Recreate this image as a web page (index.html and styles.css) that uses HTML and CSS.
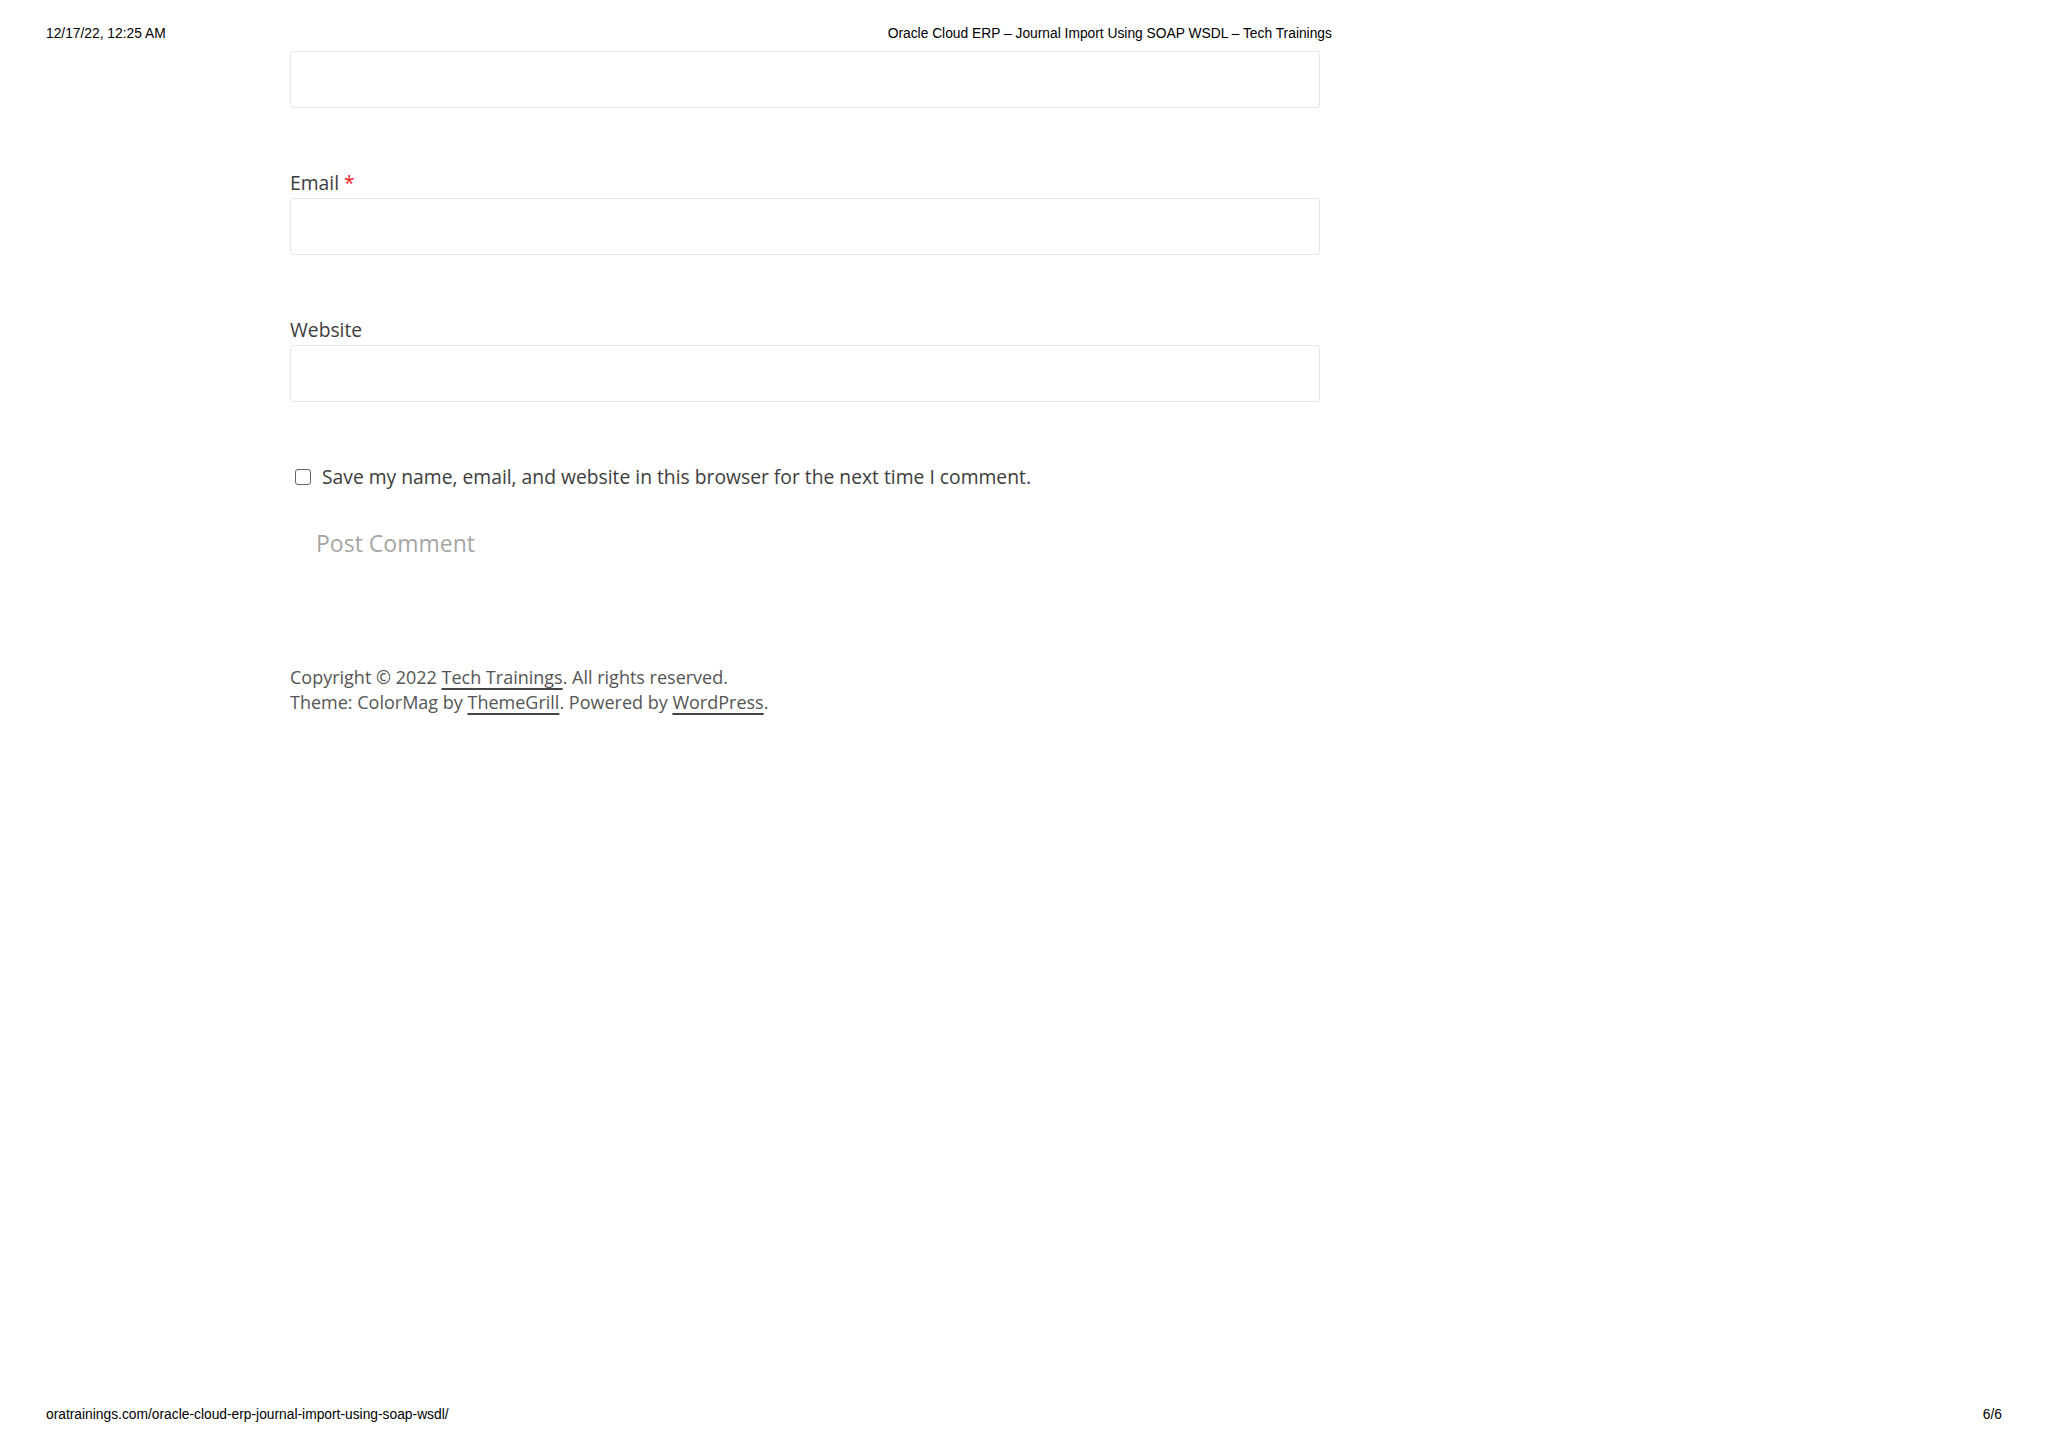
FILE: index.html
```html
<!DOCTYPE html>
<html lang="en">
<head>
<meta charset="utf-8">
<title>Oracle Cloud ERP – Journal Import Using SOAP WSDL – Tech Trainings</title>
<link rel="stylesheet" href="styles.css">
</head>
<body>
<div class="page">
  <header class="print-head">
    <span class="print-date">12/17/22, 12:25 AM</span>
    <span class="print-title">Oracle Cloud ERP – Journal Import Using SOAP WSDL – Tech Trainings</span>
  </header>

  <main class="content">
    <div class="field field-first">
      <input class="text-input" type="text" aria-label="Name">
    </div>
    <div class="field">
      <label class="field-label" for="email">Email <span class="required">*</span></label>
      <input class="text-input" id="email" type="email">
    </div>
    <div class="field">
      <label class="field-label" for="url">Website</label>
      <input class="text-input" id="url" type="url">
    </div>
    <p class="consent">
      <input class="consent-box" id="consent" type="checkbox">
      <label class="consent-label" for="consent">Save my name, email, and website in this browser for the next time I comment.</label>
    </p>
    <p class="form-submit">
      <button class="submit-btn" type="button">Post Comment</button>
    </p>

    <footer class="site-footer">
      <div class="copyright">Copyright © 2022 <a href="#" class="foot-link">Tech Trainings</a>. All rights reserved.</div>
      <div class="credits">Theme: ColorMag by <a href="#" class="foot-link">ThemeGrill</a>. Powered by <a href="#" class="foot-link">WordPress</a>.</div>
    </footer>
  </main>

  <footer class="print-foot">
    <span class="print-url">oratrainings.com/oracle-cloud-erp-journal-import-using-soap-wsdl/</span>
    <span class="print-page">6/6</span>
  </footer>
</div>
</body>
</html>
```

FILE: styles.css
```css
html, body {
  margin: 0;
  padding: 0;
  background: #ffffff;
}

.page {
  width: 2048px;
  height: 1448px;
  display: flex;
  flex-direction: column;
  box-sizing: border-box;
}

/* print header / footer */
.print-head,
.print-foot {
  font-family: "Liberation Sans", Arial, sans-serif;
  font-size: 13.8px;
  line-height: 16px;
  color: #000;
  display: flex;
  padding: 0 46px;
}

.print-head {
  padding-top: 26px;
}

.print-title {
  margin-left: 722px;
}

.print-foot {
  margin-top: auto;
  padding-bottom: 25px;
  justify-content: space-between;
}

/* content column */
.content {
  margin-top: 9px;
  margin-left: 290px;
  width: 1030px;
  font-family: "Open Sans", "Noto Sans", sans-serif;
  color: #3d3d3d;
  font-size: 19.3px;
}

.field-first {
  margin-top: 0;
}

.field-first + .field {
  margin-top: 62px;
}

.field + .field {
  margin-top: 63px;
}

.field-label {
  display: block;
  line-height: 24px;
  margin-bottom: 3px;
}

.required {
  color: #ee1c1c;
}

.text-input {
  display: block;
  width: 100%;
  height: 57px;
  box-sizing: border-box;
  border: 1px solid #e7e7e7;
  border-radius: 3px;
  background: #ffffff;
  margin: 0;
  padding: 0 10px;
  font: inherit;
}

.consent {
  margin: 63px 0 0 0;
  display: flex;
  align-items: center;
  line-height: 24px;
}

.consent-box {
  -webkit-appearance: none;
  appearance: none;
  width: 16px;
  height: 16px;
  flex: none;
  box-sizing: border-box;
  margin: 0 11px 0 5px;
  border: 1.5px solid #666666;
  border-radius: 3px;
  background: #fff;
}

.form-submit {
  margin: 39px 0 0 0;
}

.submit-btn {
  font-family: "Open Sans", "Noto Sans", sans-serif;
  font-size: 23px;
  line-height: 30px;
  color: #a6a6a6;
  background: none;
  border: none;
  padding: 0 0 0 26px;
  margin: 0;
}

.site-footer {
  margin-top: 107px;
  font-size: 18px;
  line-height: 25px;
  color: #555555;
}

.foot-link {
  color: #555555;
  text-decoration: underline;
  text-decoration-thickness: 1.5px;
  text-underline-offset: 4px;
  text-decoration-color: #444;
}
```
